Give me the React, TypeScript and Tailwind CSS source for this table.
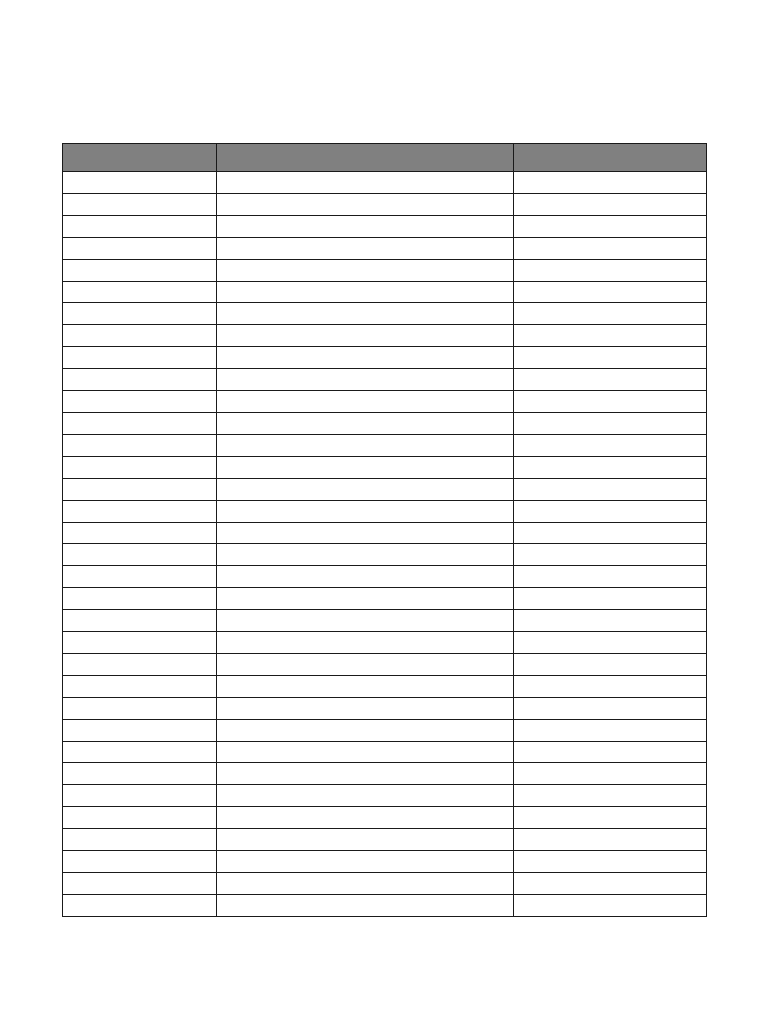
const rows = Array.from({ length: 34 }, (_, i) => i);

export default function App() {
  return (
    <div className="min-h-[1024px] w-[768px] bg-white pt-[143px] pl-[62px]">
      <table className="w-[644px] table-fixed border-collapse border-[1.5px] border-[#444444]">
        <colgroup>
          <col className="w-[154px]" />
          <col className="w-[297px]" />
          <col className="w-[193px]" />
        </colgroup>
        <thead>
          <tr className="h-[28px] bg-[#808080]">
            <th className="border border-[#1a1a1a] p-0"></th>
            <th className="border border-[#1a1a1a] p-0"></th>
            <th className="border border-[#1a1a1a] p-0"></th>
          </tr>
        </thead>
        <tbody>
          {rows.map((r) => (
            <tr key={r} className="h-[21.92px]">
              <td className="border border-[#1a1a1a] p-0"></td>
              <td className="border border-[#1a1a1a] p-0"></td>
              <td className="border border-[#1a1a1a] p-0"></td>
            </tr>
          ))}
        </tbody>
      </table>
    </div>
  );
}
